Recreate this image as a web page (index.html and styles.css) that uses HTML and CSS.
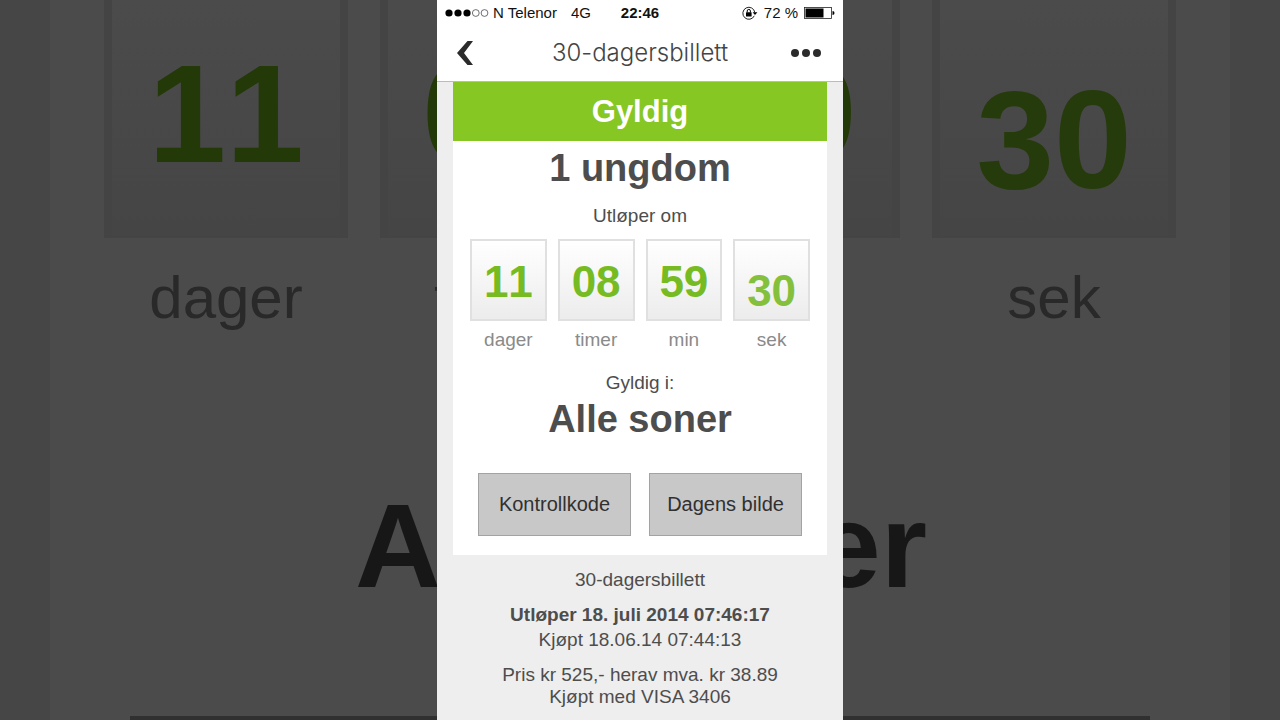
FILE: index.html
```html
<!DOCTYPE html>
<html lang="no">
<head>
<meta charset="utf-8">
<meta name="viewport" content="width=device-width, initial-scale=1">
<title>30-dagersbillett</title>
<link rel="stylesheet" href="styles.css">
</head>
<body>
<div class="stage">
  <div class="backdrop" aria-hidden="true">
    <div class="backdrop-card">
      <div class="backdrop-tiles">
        <div class="backdrop-unit"><div class="backdrop-tile">11</div><div class="backdrop-label">dager</div></div>
        <div class="backdrop-unit backdrop-unit-left"><div class="backdrop-tile">0</div><div class="backdrop-label">t</div></div>
        <div class="backdrop-unit backdrop-unit-right"><div class="backdrop-tile">9</div></div>
        <div class="backdrop-unit"><div class="backdrop-tile backdrop-tile-moving">30</div><div class="backdrop-label">sek</div></div>
      </div>
      <div class="backdrop-zone"><span>A</span><span>er</span></div>
      <div class="backdrop-bar"></div>
    </div>
  </div>

  <main class="phone">
    <div class="status">
      <div class="status-left">
        <svg class="signal" width="44" height="8" viewBox="0 0 44 8" aria-hidden="true">
          <circle cx="4" cy="4" r="3.6"/><circle cx="13" cy="4" r="3.6"/><circle cx="22" cy="4" r="3.6"/>
          <circle cx="30.800" cy="4" r="3.400" fill="none" stroke="#333" stroke-width=".7"/><circle cx="39.500" cy="4" r="3.400" fill="none" stroke="#333" stroke-width=".7"/>
        </svg>
        <span>N Telenor</span>
        <span class="network">4G</span>
      </div>
      <time class="clock">22:46</time>
      <div class="status-right">
        <svg width="16" height="14" viewBox="0 0 16 14" aria-hidden="true">
          <path d="M12.300 9.800A6 6 0 1 1 12.800 6.500" fill="none" stroke="#222" stroke-width="1"/>
          <path d="M10.600 6.300h4.800L13 9z"/>
          <rect x="4" y="6.200" width="5.600" height="4.200" rx=".5"/>
          <path d="M5.200 6.500V5a1.600 1.600 0 0 1 3.200 0v1.500" fill="none" stroke="#000" stroke-width="1"/>
        </svg>
        <span>72 %</span>
        <svg width="31" height="12" viewBox="0 0 31 12" aria-hidden="true">
          <rect x=".5" y=".5" width="27" height="11" fill="#fff" stroke="#222" stroke-width=".8"/>
          <rect x="1.500" y="1.500" width="18" height="9"/>
          <path d="M28.500 4a2 2 0 0 1 0 4z"/>
        </svg>
      </div>
    </div>

    <header class="nav">
      <button class="icon-button" type="button" aria-label="Tilbake">
        <svg width="18" height="24" viewBox="0 0 18 24" aria-hidden="true"><path d="M10.500 0H16L7 12l9 12h-5.500L0 12z"/></svg>
      </button>
      <h1 class="title">30-dagersbillett</h1>
      <button class="icon-button" type="button" aria-label="Mer">
        <svg width="32" height="10" viewBox="0 0 32 10" aria-hidden="true"><circle cx="4" cy="5" r="4"/><circle cx="15" cy="5" r="4"/><circle cx="26" cy="5" r="4"/></svg>
      </button>
    </header>

    <section class="ticket">
      <div class="banner">Gyldig</div>
      <div class="ticket-body">
        <h2 class="headline">1 ungdom</h2>
        <p class="expires">Utløper om</p>
        <div class="countdown">
          <div class="unit"><div class="tile">11</div><div class="label">dager</div></div>
          <div class="unit"><div class="tile">08</div><div class="label">timer</div></div>
          <div class="unit"><div class="tile">59</div><div class="label">min</div></div>
          <div class="unit"><div class="tile tile-moving">30</div><div class="label">sek</div></div>
        </div>
        <p class="valid">Gyldig i:</p>
        <h2 class="headline">Alle soner</h2>
        <div class="actions">
          <button class="action" type="button">Kontrollkode</button>
          <button class="action" type="button">Dagens bilde</button>
        </div>
      </div>
    </section>

    <footer class="receipt">
      <p>30-dagersbillett</p>
      <div class="dates">
        <p><strong>Utløper 18. juli 2014 07:46:17</strong></p>
        <p>Kjøpt 18.06.14 07:44:13</p>
      </div>
      <div class="payment">
        <p>Pris kr 525,- herav mva. kr 38.89</p>
        <p>Kjøpt med VISA 3406</p>
      </div>
    </footer>
  </main>
</div>
</body>
</html>
```

FILE: styles.css
```css
* { box-sizing: border-box; }

body {
  margin: 0;
  background: #464646;
  font-family: "Liberation Sans", Arial, sans-serif;
  font-size: 19px;
  line-height: 24px;
  color: #4d4d4d;
}

h1, h2, p { margin: 0; }

button { font-family: inherit; cursor: pointer; }

.stage {
  position: relative;
  min-height: 100vh;
  display: flex;
  justify-content: center;
  overflow: hidden;
}

/* Enlarged, dimmed ticket that shows on both sides of the phone */
.backdrop {
  position: absolute;
  inset: 0;
  padding: 0 50px;
  overflow: hidden;
  text-align: center;
}

.backdrop-card {
  min-height: 100%;
  background: #4b4b4b;
}

.backdrop-tiles {
  display: grid;
  grid-template-columns: repeat(4, 1fr);
  gap: 32px;
  padding: 0 54px;
}

.backdrop-tile {
  height: 238px;
  padding-top: 34px;
  border: 8px solid #444;
  border-top: 0;
  border-bottom-width: 2px;
  background: linear-gradient(#4b4b4b, #454545);
  color: #233908;
  font-size: 140px;
  font-kerning: none;
  font-weight: bold;
  line-height: 160px;
}

.backdrop-tile-moving {
  padding-top: 60px;
  color: #263b0b;
}

.backdrop-label {
  margin-top: 26px;
  color: #292929;
  font-size: 60px;
  line-height: 68px;
}

.backdrop-unit-left { text-align: left; }
.backdrop-unit-left .backdrop-tile { padding-left: 34px; }
.backdrop-unit-left .backdrop-label { padding-left: 54px; }

.backdrop-unit-right { text-align: right; }
.backdrop-unit-right .backdrop-tile { padding-right: 36px; }

.backdrop-zone {
  display: flex;
  justify-content: space-between;
  margin-top: 144px;
  padding: 0 303px 0 305px;
  color: #171717;
  font-size: 119px;
  font-weight: bold;
  line-height: 140px;
}

.backdrop-bar {
  height: 40px;
  margin: 100px 80px 0;
  background: #303030;
}

.phone {
  position: relative;
  width: 100%;
  max-width: 406px;
  background: #eee;
  text-align: center;
}

.status {
  display: grid;
  grid-template-columns: 1fr auto 1fr;
  align-items: center;
  height: 26px;
  padding: 0 8px;
  background: #fff;
  color: #111;
  font-size: 15px;
}

.status-left, .status-right {
  display: flex;
  align-items: center;
  gap: 4px;
}

.status-right {
  justify-content: flex-end;
  gap: 6px;
}

.network { margin-left: 10px; }

.clock { font-weight: bold; }

.nav {
  display: flex;
  align-items: center;
  justify-content: space-between;
  height: 56px;
  padding: 0 16px 2px;
  background: #fff;
  border-bottom: 1px solid #bbb;
}

.icon-button {
  display: flex;
  align-items: center;
  width: 40px;
  height: 40px;
  padding: 0 4px;
  border: 0;
  background: none;
  fill: #2b2b2b;
}

.title {
  color: #444;
  font-family: Inter, "Liberation Sans", sans-serif;
  font-size: 24px;
  font-weight: 300;
  line-height: 32px;
}

.ticket {
  margin: 0 16px;
  background: #fff;
}

.banner {
  padding-top: 1px;
  background: #86c724;
  color: #fff;
  font-size: 31px;
  font-weight: bold;
  line-height: 58px;
}

.ticket-body { padding: 5px 17px 19px; }

.headline {
  font-size: 38px;
  line-height: 44px;
}

.expires { margin: 14px 0 11px; }

.countdown {
  display: grid;
  grid-template-columns: repeat(4, 1fr);
  gap: 11px;
}

.tile {
  height: 82px;
  padding-top: 16px;
  border: 2px solid #e0e0e0;
  background: linear-gradient(#fff, #ececec);
  color: #77bb22;
  font-size: 44px;
  font-kerning: none;
  font-weight: bold;
  line-height: 50px;
}

.tile-moving {
  padding-top: 25px;
  color: #84c03c;
}

.label {
  margin-top: 7px;
  color: #8a8a8a;
}

.valid { margin: 19px 0 2px; }

.actions {
  display: grid;
  grid-template-columns: 1fr 1fr;
  gap: 18px;
  margin-top: 32px;
  padding: 0 8px;
}

.action {
  height: 63px;
  padding: 0;
  border: 1px solid #a3a3a3;
  background: #c8c8c8;
  color: #303030;
  font-size: 20px;
}

.receipt { padding: 13px 16px; }

.dates { margin-top: 10px; line-height: 25px; }

.payment { margin-top: 12px; line-height: 22px; }
```
